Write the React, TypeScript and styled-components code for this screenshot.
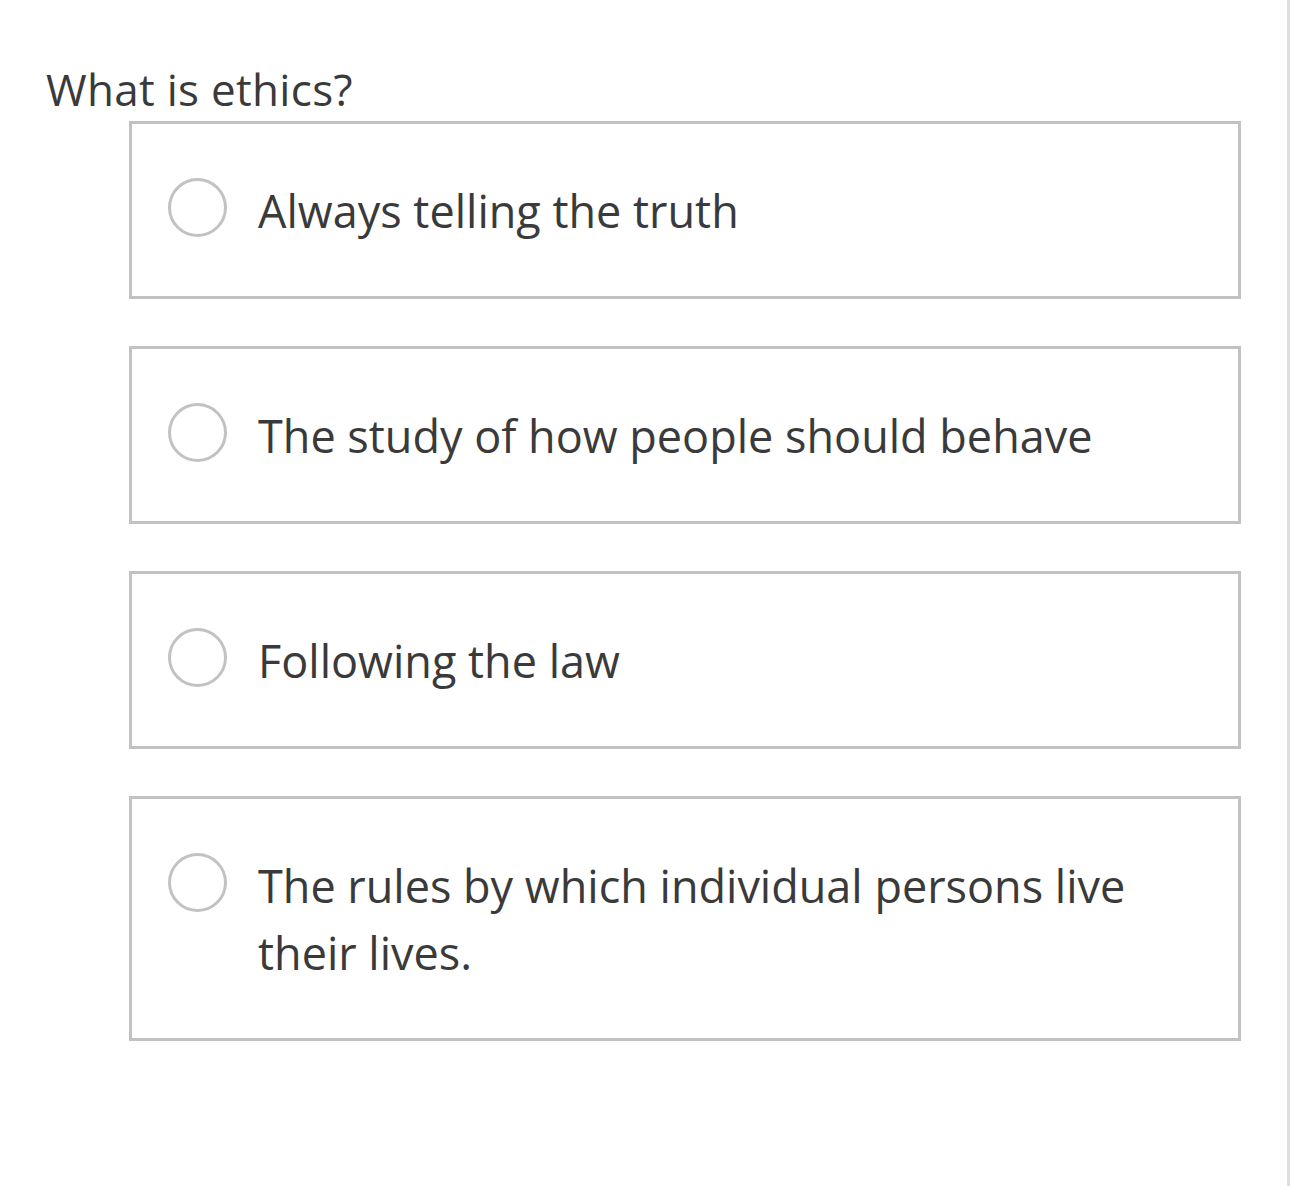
import React from "react";
import styled, { createGlobalStyle } from "styled-components";

const Global = createGlobalStyle`
  html, body { margin: 0; padding: 0; background: #ffffff; }
  body { font-family: "Open Sans", "Liberation Sans", sans-serif; color: #3a3a3a; }
`;

const Page = styled.div`
  box-sizing: border-box;
  width: 1290px;
  min-height: 1186px;
  border-right: 3px solid #dedede;
  padding: 60px 46px 0 46px;
`;

const Question = styled.h1`
  margin: 0;
  font-size: 44px;
  font-weight: 400;
  letter-spacing: 0.3px;
  line-height: 58px;
  color: #3a3a3a;
`;

const Options = styled.div`
  display: flex;
  flex-direction: column;
  gap: 47px;
  margin: 3px 0 0 83px;
`;

const Option = styled.label`
  box-sizing: border-box;
  display: flex;
  align-items: flex-start;
  gap: 31px;
  border: 3px solid #c2c2c2;
  padding: 53px 40px 52px 36px;
  cursor: pointer;
`;

const Radio = styled.span`
  box-sizing: border-box;
  flex: 0 0 59px;
  width: 59px;
  height: 59px;
  margin-top: 1px;
  border-radius: 50%;
  border: 3px solid #c2c2c2;
  background: #fff;
`;

const Text = styled.span`
  font-size: 45px;
  line-height: 67px;
  color: #3a3a3a;
`;

const answers = [
  "Always telling the truth",
  "The study of how people should behave",
  "Following the law",
  "The rules by which individual persons live their lives.",
];

export default function App() {
  return (
    <>
      <Global />
      <Page>
        <Question>What is ethics?</Question>
        <Options>
          {answers.map((a) => (
            <Option key={a}>
              <Radio />
              <Text>{a}</Text>
            </Option>
          ))}
        </Options>
      </Page>
    </>
  );
}
